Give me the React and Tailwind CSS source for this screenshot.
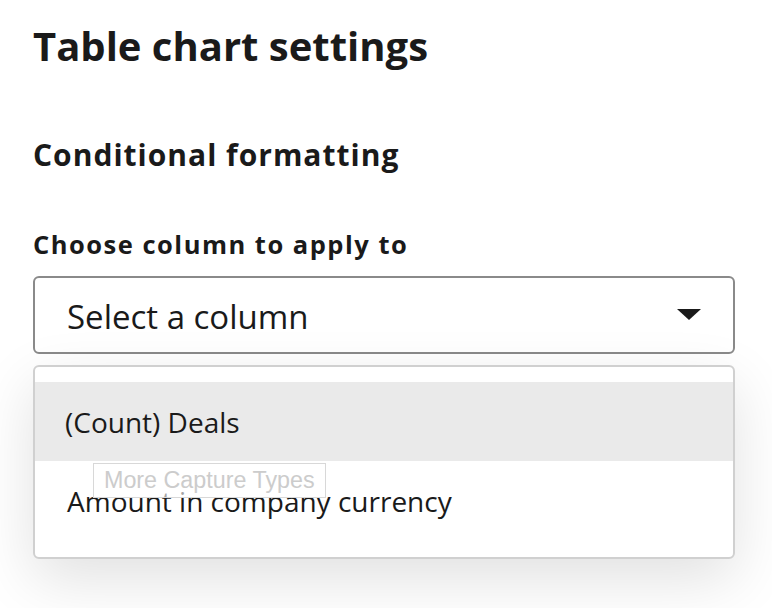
import React from "react";

const font = { fontFamily: "'Open Sans', 'Noto Sans', sans-serif" };

export default function App() {
  return (
    <div className="min-h-screen w-full bg-white text-[#1a1a1a]" style={font}>
      <div className="pl-[33px] pr-[37px] pt-[21px]">
        <h1 className="text-[40px] font-bold leading-[50px]">Table chart settings</h1>
        <h2 className="mt-[64px] text-[30px] font-bold leading-[40px] tracking-[1px]">Conditional formatting</h2>
        <label className="mt-[53px] block text-[25.5px] font-bold leading-[32px] tracking-[1.5px]">
          Choose column to apply to
        </label>
        <button className="mt-[16px] flex h-[78px] w-full items-center justify-between rounded-[6px] border-2 border-[#8a8a8a] bg-white pl-[32px] pr-[32px] pt-[4px] text-left">
          <span className="text-[33px] leading-[40px]">Select a column</span>
          <svg width="24" height="11" viewBox="0 0 24 11" className="-mt-[6px]">
            <path d="M0 0 L24 0 L12 11 Z" fill="#1a1a1a" />
          </svg>
        </button>
        <div className="relative mt-[11px] rounded-[6px] border-2 border-[#d0d0d0] bg-white pb-[17px] pt-[15px] shadow-[0_20px_60px_rgba(0,0,0,0.12)]">
          <ul>
            <li className="flex h-[79px] items-center bg-[#eaeaea] px-[30px] text-[28px]">(Count) Deals</li>
            <li className="flex h-[79px] items-center px-[32px] text-[28px]">Amount in company currency</li>
          </ul>
          <div
            className="absolute left-[58px] top-[96px] border border-[#d8d8d8] bg-white/60 px-[10px] text-[23.3px] leading-[33px] text-[#cccccc]"
            style={{ fontFamily: "'Liberation Sans', Arial, sans-serif" }}
          >
            More Capture Types
          </div>
        </div>
      </div>
    </div>
  );
}
